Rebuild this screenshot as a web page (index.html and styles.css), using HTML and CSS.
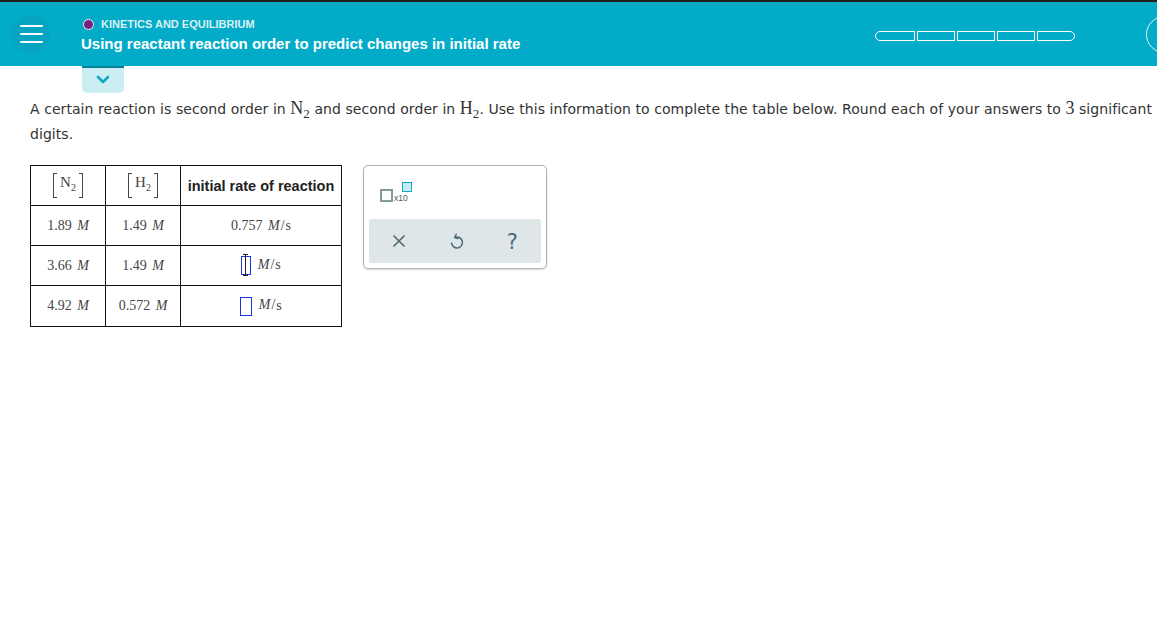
FILE: index.html
```html
<!DOCTYPE html>
<html>
<head>
<meta charset="utf-8">
<link rel="stylesheet" href="styles.css">
</head>
<body>
<header class="topbar">
  <div class="menu-btn">
    <span></span><span></span><span></span>
  </div>
  <div class="titles">
    <div class="topic"><span class="dot"></span>KINETICS AND EQUILIBRIUM</div>
    <div class="title">Using reactant reaction order to predict changes in initial rate</div>
  </div>
  <div class="progress">
    <span class="seg first"></span><span class="seg"></span><span class="seg"></span><span class="seg"></span><span class="seg last"></span>
  </div>
  <div class="ring"></div>
</header>
<div class="tab">
  <svg width="14" height="9" viewBox="0 0 14 9"><path d="M2 2 L7 7 L12 2" fill="none" stroke="#10a9c4" stroke-width="2.6" stroke-linecap="round" stroke-linejoin="round"/></svg>
</div>
<main class="content">
  <p class="question">A certain reaction is second order in <span class="m">N<sub>2</sub></span> and second order in <span class="m">H<sub>2</sub></span>. Use this information to complete the table below. Round each of your answers to <span class="m">3</span> significant digits.</p>
  <div class="work">
    <table class="data">
      <tr class="head">
        <td class="c1"><span class="conc"><span class="br l"></span><span class="sp">N<sub>2</sub></span><span class="br r"></span></span></td>
        <td class="c2"><span class="conc"><span class="br l"></span><span class="sp">H<sub>2</sub></span><span class="br r"></span></span></td>
        <td class="c3 hdr">initial rate of reaction</td>
      </tr>
      <tr>
        <td>1.89 <i>M</i></td>
        <td>1.49 <i>M</i></td>
        <td>0.757 <i>M</i><span class="sl">/</span>s</td>
      </tr>
      <tr>
        <td>3.66 <i>M</i></td>
        <td>1.49 <i>M</i></td>
        <td><span class="ans active"><span class="cursor"></span></span> <i>M</i><span class="sl">/</span>s</td>
      </tr>
      <tr>
        <td>4.92 <i>M</i></td>
        <td>0.572 <i>M</i></td>
        <td><span class="ans"></span> <i>M</i><span class="sl">/</span>s</td>
      </tr>
    </table>
    <div class="palette">
      <div class="sci">
        <span class="base"></span><span class="x10">x10</span><span class="exp"></span>
      </div>
      <div class="actions">
        <svg width="16" height="16" viewBox="0 0 16 16"><path d="M2.5 2.5 L13.5 13.5 M13.5 2.5 L2.5 13.5" stroke="#4f6a76" stroke-width="1.6" fill="none"/></svg>
        <svg width="16" height="18" viewBox="0 0 16 18"><path d="M5.7 5.5 A5.5 5.5 0 1 1 2.5 10.5" fill="none" stroke="#4f6a76" stroke-width="1.5"/><path d="M7.2 2.2 L5.7 5.5 L9 6.6" fill="none" stroke="#4f6a76" stroke-width="1.5" stroke-linejoin="round" stroke-linecap="round"/></svg>
        <span class="help">?</span>
      </div>
    </div>
  </div>
</main>
</body>
</html>
```

FILE: styles.css
```css
* { box-sizing: border-box; }
html, body { margin: 0; padding: 0; background: #fff; }
body { font-family: "DejaVu Sans", Verdana, sans-serif; color: #333; }

.topbar {
  height: 66px;
  border-top: 2px solid #1d1f20;
  background: #02acc8;
  display: flex;
  align-items: center;
  position: relative;
  overflow: hidden;
}
.menu-btn {
  width: 38px; height: 38px;
  margin-left: 12px;
  border-radius: 50%;
  background: #06a4bf;
  display: flex; flex-direction: column; justify-content: center; align-items: center; gap: 6px;
}
.menu-btn span { display: block; width: 23px; height: 2px; background: #fff; border-radius: 1px; }
.titles { margin-left: 31px; font-family: "Liberation Sans", Arial, sans-serif; margin-top: 1px; }
.topic {
  display: flex; align-items: center;
  font-size: 11px; font-weight: bold; color: #d9f1f6;
  height: 14px;
}
.dot {
  width: 11px; height: 11px; border-radius: 50%;
  background: #7a1f7e; border: 1.5px solid #e8f4f7;
  margin-left: 2px; margin-right: 7px;
}
.title { font-size: 15px; font-weight: bold; color: #fff; margin-top: 4px; }
.progress { display: flex; margin-left: auto; margin-top: 3px; gap: 2px; margin-right: 82px; }
.seg { width: 38px; height: 10px; border: 1.5px solid #fff; }
.seg.first { width: 40px; border-radius: 6px 0 0 6px; }
.seg.last { width: 38px; border-radius: 0 6px 6px 0; }
.ring {
  position: absolute; left: 1146px; top: 14px;
  width: 37px; height: 37px; border-radius: 50%;
  border: 1.5px solid #e6f6f9;
}

.tab {
  margin-left: 82px; width: 42px; height: 27px;
  background: #cbeef3;
  border-top: 2px solid #03829a;
  border-radius: 0 0 5px 5px;
  display: flex; justify-content: center; align-items: center; padding-bottom: 2px;
}

.content { padding: 0 0 0 30px; }
.question {
  margin: 4px 0 0 0;
  font-size: 14px; line-height: 25px; color: #333;
  width: 1130px; letter-spacing: 0.06px;
}
.m { font-family: "Liberation Serif", "Times New Roman", serif; font-size: 18px; line-height: 0; }
.m sub { font-size: 13px; vertical-align: -4px; line-height: 0; }

.work { display: flex; align-items: flex-start; gap: 21px; margin-top: 18px; }
.data { border-collapse: collapse; font-family: "Liberation Serif", "Times New Roman", serif; font-size: 14px; color: #444; }
.data td { border: 1px solid #111; height: 40px; text-align: center; padding: 0; }
.data .c1, .data .c2 { width: 75px; }
.data .c3 { width: 161px; }
.data i { font-style: italic; margin-left: 2px; }
.data .sl { margin: 0 1px; }
.data .hdr { font-family: "Liberation Sans", Arial, sans-serif; font-weight: bold; font-size: 14.5px; color: #222; }
.data tr:last-child td { height: 41px; }

.conc { display: inline-flex; align-items: center; height: 24px; vertical-align: middle; }
.br { display: inline-block; width: 4px; height: 25px; border: 1px solid #444; }
.br.l { border-right: none; }
.br.r { border-left: none; }
.sp { padding: 0 3px; font-size: 15px; line-height: 1; margin-top: -4px; }
.sp sub { font-size: 10px; vertical-align: -4px; }

.ans { display: inline-block; width: 12px; height: 19px; border: 1.5px solid #1f33e0; vertical-align: middle; margin-right: 1px; position: relative; }
.ans.active { width: 10px; }
.cursor { position: absolute; left: 1px; top: -3px; width: 5px; height: 22px; border-top: 1px solid #222; border-bottom: 1px solid #222; }
.cursor::before { content: ""; position: absolute; left: 2px; top: 0; width: 1px; height: 20px; background: #222; }

.palette {
  width: 184px; height: 104px;
  border: 1px solid #a8b4b8; border-radius: 5px;
  box-shadow: 0 1px 2px rgba(0,0,0,0.15);
  padding: 0 5px 5px 5px;
  display: flex; flex-direction: column; justify-content: space-between;
}
.sci { position: relative; height: 50px; }
.base { position: absolute; left: 11px; top: 23px; width: 13px; height: 13px; border: 2px solid #859aa0; }
.x10 { position: absolute; left: 25px; top: 27px; font-family: "Liberation Sans", Arial, sans-serif; font-size: 8.5px; color: #4a5f67; }
.exp { position: absolute; left: 33px; top: 16px; width: 10px; height: 10px; border: 1.5px solid #12a6c1; background: #c6ebf1; }
.actions {
  height: 44px; background: #dee6e8; border-radius: 3px;
  display: flex; align-items: center; justify-content: space-between; padding: 0 23px 0 22px;
}
.help { font-family: "DejaVu Sans", sans-serif; font-size: 21px; color: #4f6a76; margin-top: 2px; }
```
